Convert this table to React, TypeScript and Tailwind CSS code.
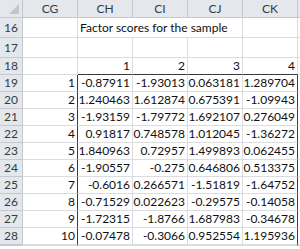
const COLS = ['CG', 'CH', 'CI', 'CJ', 'CK'];

const DATA = [
  ['-0.87911', '-1.93013', '0.063181', '1.289704'],
  ['1.240463', '1.612874', '0.675391', '-1.09943'],
  ['-1.93159', '-1.79772', '1.692107', '0.276049'],
  ['0.91817', '0.748578', '1.012045', '-1.36272'],
  ['1.840963', '0.72957', '1.499893', '0.062455'],
  ['-1.90557', '-0.275', '0.646806', '0.513375'],
  ['-0.6016', '0.266571', '-1.51819', '-1.64752'],
  ['-0.71529', '0.022623', '-0.29575', '-0.14058'],
  ['-1.72315', '-1.8766', '1.687983', '-0.34678'],
  ['-0.07478', '-0.3066', '0.952554', '1.195936'],
];

const head = 'bg-[#e4e7eb] border-r border-b border-[#c5c9ce] text-[#333d47] flex items-center justify-center';
const base = 'border-r border-b flex items-center justify-end pr-[2px] whitespace-nowrap';
const cell = `${base} border-[#dadcdd]`;

function RowHead({ n }: { n: number }) {
  return <div className={head}>{n}</div>;
}

export default function App() {
  return (
    <div
      className="w-[300px] h-[249px] overflow-hidden bg-white text-[#111] text-[12px] leading-none"
      style={{ fontFamily: 'Lato, "Open Sans", sans-serif' }}
    >
      <div className="grid grid-cols-[23px_55px_55px_55px_55px_55px_1fr] grid-rows-[18px_20px_20px_repeat(11,17px)_1fr]">
        {/* column headers */}
        <div className={`${head} items-end justify-end p-[3px]`}>
          <svg width="10" height="10" viewBox="0 0 10 10">
            <polygon points="10,0 10,10 0,10" fill="#c3c7cc" />
          </svg>
        </div>
        {COLS.map((c) => (
          <div key={c} className={head}>{c}</div>
        ))}
        <div className={head} />

        {/* row 16 */}
        <RowHead n={16} />
        <div className={cell} />
        <div className="col-span-3 border-r border-b border-[#dadcdd] flex items-center pl-[2px] whitespace-nowrap">
          Factor scores for the sample
        </div>
        <div className={cell} />
        <div className={cell} />

        {/* row 17 */}
        <RowHead n={17} />
        {COLS.map((c) => (
          <div key={c} className={cell} />
        ))}
        <div className={cell} />

        {/* row 18 — bottom edge starts the outlined block */}
        <RowHead n={18} />
        <div className={cell} />
        {[1, 2, 3, 4].map((k) => (
          <div key={k} className={`${base} border-r-[#dadcdd] border-b-[#3a3a3a]`}>{k}</div>
        ))}
        <div className={cell} />

        {DATA.map((r, i) => (
          <div key={i} className="contents">
            <RowHead n={19 + i} />
            <div className={`${base} border-r-[#3a3a3a] border-b-[#dadcdd]`}>{i + 1}</div>
            {r.map((v, j) => (
              <div
                key={j}
                className={j === 3 ? `${base} border-r-[#3a3a3a] border-b-[#dadcdd]` : cell}
              >
                {v}
              </div>
            ))}
            <div className={cell} />
          </div>
        ))}

        <div className={head} />
        <div className={`${base} border-r-[#3a3a3a] border-b-[#dadcdd]`} />
        <div className={cell} />
        <div className={cell} />
        <div className={cell} />
        <div className={`${base} border-r-[#3a3a3a] border-b-[#dadcdd]`} />
        <div className={cell} />
      </div>
    </div>
  );
}
